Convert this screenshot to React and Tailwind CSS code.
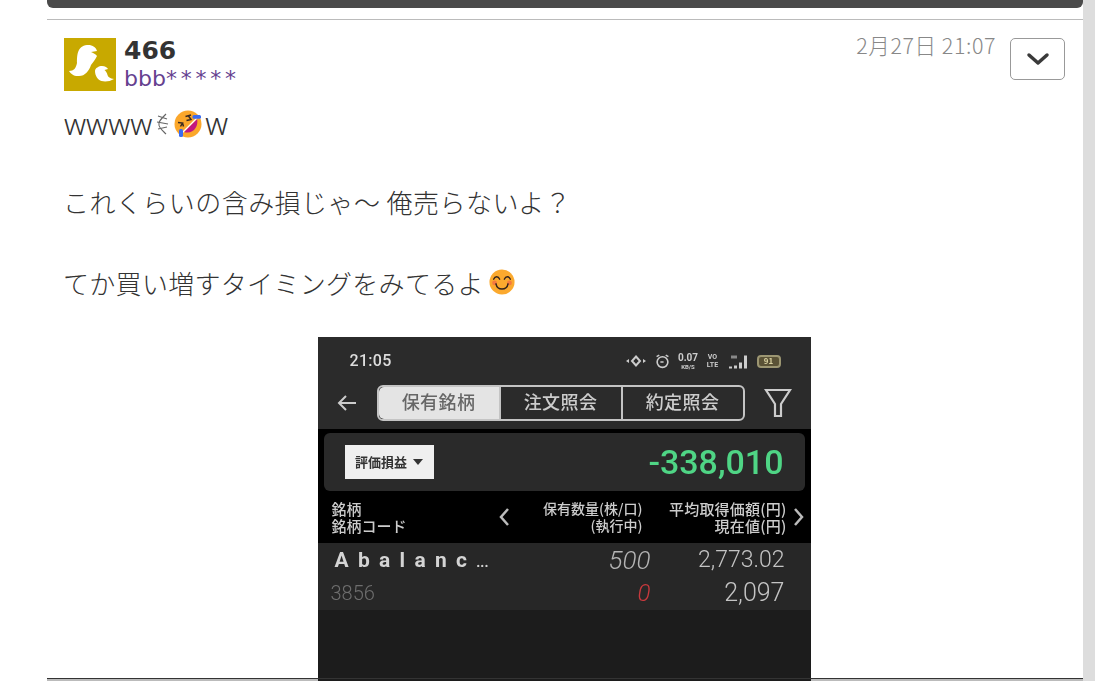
const jp = "font-['Noto_Sans_CJK_JP','Noto_Sans',sans-serif]";
function RoflEmoji() {
  return (
    <svg viewBox="0 0 28 28" className="w-[28px] h-[28px] shrink-0">
      <circle cx="14" cy="14" r="13.5" fill="#FBA72B" />
      <path d="M10 22 L23 9 C25 16 19 25 10 22Z" fill="#C3177F" />
      <path d="M8.500 22.500 L23 8" stroke="#fff" strokeWidth="1.300" />
      <path d="M11.500 6.500 L17 5 M12.500 10.500 L17 9.500 L14.500 6" stroke="#3A2A20" strokeWidth="1.500" fill="none" />
      <path d="M4 12.500 L8.500 13 L6.500 16.500 M8.500 13 L9.500 16.500" stroke="#3A2A20" strokeWidth="1.500" fill="none" />
      <rect x="18.500" y="5" width="8.500" height="3.800" rx="1.500" fill="#3C6CF0" />
      <rect x="5" y="19" width="4" height="8" rx="1.500" fill="#3C6CF0" />
    </svg>
  );
}
function SmileEmoji() {
  return (
    <svg viewBox="0 0 28 28" className="w-[26px] h-[26px] shrink-0 ml-[5px]">
      <circle cx="14" cy="14" r="13.5" fill="#FBA92E" />
      <circle cx="6" cy="15" r="2.600" fill="#F5793F" />
      <circle cx="22" cy="15" r="2.600" fill="#F5793F" />
      <path d="M5 11 C6.500 7.500 10 7.500 11.500 11 M16.500 11 C18 7.500 21.500 7.500 23 11" stroke="#33231B" strokeWidth="1.500" fill="none" strokeLinecap="round" />
      <path d="M7.500 16 C9 23.500 19 23.500 20.500 16" stroke="#33231B" strokeWidth="1.600" fill="none" strokeLinecap="round" />
    </svg>
  );
}
function Avatar() {
  return (
    <div className="w-[52px] h-[53px] bg-[#C8A900] shrink-0">
      <svg viewBox="0 0 52 53" className="w-full h-full">
        <path d="M5 33 C10 33 12 30 13 25 C13 18 13 8 23 7 C28 6.500 32 9 33 13 L27 14 C29 15 32 16 33 18 C31 22 29 24 27 27 C25 33 21 38 15 38 C10 38.500 7 36 5 33Z" fill="#fff" />
        <path d="M31 33 C31 30 35 28 38 28 C41 28 43.500 29.500 44 31 L40.500 32 C42 33 43 35 43.500 37 C44 39 46 40.500 50 41 C46 43.500 41 44 37.500 43 C34 42 31 38 31 33Z" fill="#fff" />
      </svg>
    </div>
  );
}
function Tab({ active, label, last }) {
  return (
    <div className={`flex-1 flex items-center justify-center pb-[3px] text-[18px] font-medium tracking-[0.4px] ${active ? "bg-[#e4e4e4] text-[#666] rounded-l-[5px]" : "text-[#ccc]"} ${last ? "" : "border-r-2 border-[#c4c4c4]"}`}>
      {label}
    </div>
  );
}
function Screenshot() {
  return (
    <div className={`w-[493px] h-[344px] shrink-0 overflow-hidden bg-[#1c1c1c] flex flex-col relative z-10 ${jp}`}>
      <div className="bg-[#2b2b2b] h-[92px] flex flex-col shrink-0">
        <div className="h-[48px] flex items-center justify-between pl-[32px] pr-[30px] blur-[0.7px]">
          <span className="text-[16px] text-[#ddd] font-['Roboto',sans-serif] font-medium tracking-[0.3px]">21:05</span>
          <div className="flex items-center gap-[8px] text-[#ccc]">
            <svg viewBox="0 0 22 12" className="w-[22px] h-[12px]"><path d="M1 6 L4 4 V8Z M21 6 L18 4 V8Z" fill="#ccc" /><path d="M11 1.500 L15 6 L11 10.500 L7 6Z" fill="none" stroke="#ccc" strokeWidth="2" /></svg>
            <svg viewBox="0 0 14 14" className="w-[15px] h-[15px]"><circle cx="7" cy="7.500" r="5" fill="none" stroke="#ccc" strokeWidth="1.500" /><path d="M1.500 2.500 L4 1 M12.500 2.500 L10 1 M5 7.500 H8" stroke="#ccc" strokeWidth="1.300" /></svg>
            <div className="flex flex-col items-center w-[21px]"><span className="text-[10px] leading-[10px] font-['Roboto',sans-serif] font-bold">0.07</span><span className="text-[6px] leading-[7px] font-['Roboto',sans-serif] font-bold">KB/S</span></div>
            <div className="flex flex-col items-center w-[12px]"><span className="text-[7px] leading-[8px] font-['Roboto',sans-serif] font-bold">VO</span><span className="text-[7px] leading-[8px] font-['Roboto',sans-serif] font-bold">LTE</span></div>
            <svg viewBox="0 0 22 14" className="w-[22px] h-[15px]"><path d="M7 11h3v3h-3z M12 8h3v6h-3z M17 1h3v13h-3z M2 12h3v2h-3z" fill="#ccc" /><path d="M4 1 h6 v3 h-6z" fill="#888" /></svg>
            <div className="w-[24px] h-[13px] rounded-[4px] border-2 border-[#9c9672] bg-[#5a5236] flex items-center justify-center text-[8px] text-[#d8d0a0] font-bold leading-none">91</div>
          </div>
        </div>
        <div className="flex items-center h-[36px] pl-[17px] pr-[19px]">
          <svg viewBox="0 0 24 24" className="w-[24px] h-[24px] shrink-0 blur-[0.5px]" fill="none" stroke="#ccc" strokeWidth="2"><path d="M21 12H4 M11 5 L4 12 L11 19" /></svg>
          <div className="ml-[18px] w-[368px] h-[36px] flex rounded-[6px] border-2 border-[#c4c4c4] overflow-hidden blur-[0.7px]">
            <Tab active label="保有銘柄" />
            <Tab label="注文照会" />
            <Tab label="約定照会" last />
          </div>
          <svg viewBox="0 0 28 32" className="ml-auto w-[28px] h-[32px] blur-[0.5px]" fill="none" stroke="#ccc" strokeWidth="2.200"><path d="M2 3 H26 L17 17 V29 H11 V17Z" /></svg>
        </div>
      </div>
      <div className="bg-black pt-[4px] px-[6px] shrink-0">
        <div className="h-[58px] bg-[#2a2a2a] rounded-[6px] flex items-center justify-between pl-[21px] pr-[21px] blur-[0.6px]">
          <div className="w-[89px] h-[34px] bg-[#efefef] flex items-center justify-center gap-[6px] text-[#333] text-[13px] font-bold">
            評価損益
            <span className="w-0 h-0 border-x-[5px] border-x-transparent border-t-[6px] border-t-[#333]" />
          </div>
          <span className="text-[#4fd585] text-[34px] leading-none font-['Roboto',sans-serif] font-medium">-338,010</span>
        </div>
      </div>
      <div className="bg-black h-[52px] shrink-0 flex items-center text-[#ccc] text-[15px] leading-[17px] font-medium pl-[14px] pr-[6px] blur-[0.6px]">
        <div className="w-[166px] shrink-0"><div>銘柄</div><div>銘柄コード</div></div>
        <svg viewBox="0 0 12 20" className="w-[12px] h-[20px] shrink-0" fill="none" stroke="#bbb" strokeWidth="2.500"><path d="M10 2 L3 10 L10 18" /></svg>
        <div className="w-[143px] -ml-[10px] text-right text-[14px] shrink-0 whitespace-nowrap"><div>保有数量(株/口)</div><div>(執行中)</div></div>
        <div className="ml-[26px] w-[118px] text-right shrink-0 whitespace-nowrap tracking-[0.2px]"><div className="-ml-[10px]">平均取得価額(円)</div><div>現在値(円)</div></div>
        <svg viewBox="0 0 12 20" className="ml-auto w-[12px] h-[20px] shrink-0" fill="none" stroke="#bbb" strokeWidth="2.500"><path d="M2 2 L9 10 L2 18" /></svg>
      </div>
      <div className="bg-[#272727] h-[67px] shrink-0 flex flex-col pl-[14px] pr-[26px] font-['Roboto',sans-serif] blur-[0.5px]">
        <div className="flex items-center h-[35px]">
          <span className="pl-[3px] text-[#d4d4d4] text-[21px] font-bold tracking-[9.300px] w-[200px] whitespace-nowrap">Abalanc<span className="text-[14px] tracking-[0px]">...</span></span>
          <span className="w-[119px] text-right text-[#b4b4b4] text-[26px] font-light italic">500</span>
          <span className="ml-auto text-[#c4c4c4] text-[23px] font-light">2,773.02</span>
        </div>
        <div className="flex items-center h-[30px]">
          <span className="text-[#6e6e6e] text-[20px] font-light w-[200px] -ml-[1px]">3856</span>
          <span className="w-[120px] text-right text-[#c8393d] text-[24px] font-light italic">0</span>
          <span className="ml-auto text-[#c4c4c4] text-[25px] font-light">2,097</span>
        </div>
      </div>
      <div className="mt-auto h-[3px] border-t border-[#333] bg-[#1c1c1c]" />
    </div>
  );
}
export default function App() {
  return (
    <div className={`w-[1095px] h-[681px] overflow-hidden bg-white flex ${jp} text-[#333]`}>
      <div className="w-[1083px] h-full pl-[47px] flex flex-col relative">
        <div className="absolute left-[47px] right-0 top-[678px] h-[3px] border-t border-[#333] bg-[#bbb]" />
        <div className="h-[8px] bg-[#4a4a4a] rounded-b-[6px] shrink-0" />
        <div className="mt-[11px] border-t border-[#bbb] flex-1 min-h-0 pl-[17px] flex flex-col">
          <div className="flex pt-[18px] shrink-0">
            <Avatar />
            <div className="ml-[8px] flex flex-col -mt-[3px]">
              <span className="text-[25px] font-bold leading-[31px] text-[#333] font-['DejaVu_Sans',sans-serif]">466</span>
              <span className="text-[22px] leading-[26px] text-[#65418f] font-['DejaVu_Sans',sans-serif] whitespace-nowrap">bbb<span className="tracking-[3.800px]">*****</span></span>
            </div>
            <span className="ml-auto text-[21.500px] font-light leading-[26px] tracking-[0.55px] text-[#888] -mt-[6px] mr-[14px] whitespace-nowrap">2月27日 21:07</span>
            <button className="w-[55px] h-[42px] border border-[#999] rounded-[5px] flex items-center justify-center mr-[18px] shrink-0">
              <svg viewBox="0 0 24 14" className="w-[24px] h-[14px]" fill="none" stroke="#3a3a3a" strokeWidth="3.500" strokeLinecap="round" strokeLinejoin="round"><path d="M3 3 L12 11 L21 3" /></svg>
            </button>
          </div>
          <div className="mt-[16px] text-[26px] font-light leading-[39px] flex flex-col shrink-0 -ml-[1px]">
            <div className="flex items-center h-[31px] font-['Noto_Sans',sans-serif]">
              <span className="text-[30px] ml-[1px]">wwww</span>
              <svg viewBox="0 0 14 22" className="w-[14px] h-[22px] ml-[3px] shrink-0" fill="none" stroke="#666" strokeWidth="1.100">
                <path d="M11 1 C6 6 3 9 4 11 C3 14 7 17 11 21" />
                <path d="M3 3 L12 6 M2 9 L13 11 M3 16 L12 14" />
              </svg>
              <span className="ml-[5px] flex"><RoflEmoji /></span>
              <span className="ml-[3px] text-[31px]">w</span>
            </div>
            <div className="mt-[43px] h-[40px] whitespace-nowrap tracking-[0.45px]">これくらいの含み損じゃ～ 俺売らないよ？</div>
            <div className="mt-[40px] h-[40px] flex items-center whitespace-nowrap tracking-[0.3px]">
              てか買い増すタイミングをみてるよ
              <SmileEmoji />
            </div>
          </div>
          <div className="mt-[35px] flex justify-center pr-[18px] ml-[-1px]">
            <Screenshot />
          </div>
        </div>
      </div>
      <div className="w-[12px] h-full bg-[#ddd] relative z-20" />
    </div>
  );
}
